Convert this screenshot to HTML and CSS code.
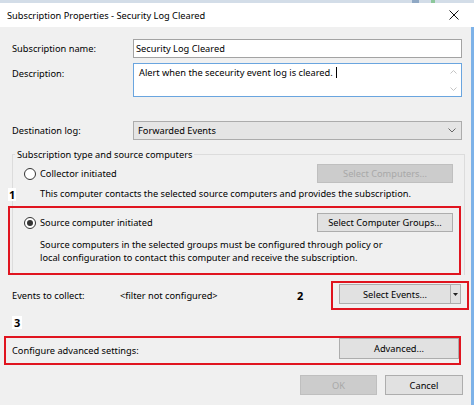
FILE: index.html
```html
<!DOCTYPE html>
<html>
<head>
<meta charset="utf-8">
<title>Subscription Properties</title>
<link rel="stylesheet" href="styles.css">
</head>
<body>
<div class="desk"><span class="dk-icon dk-a"></span><span class="dk-icon dk-b"></span></div>
<div class="win">
  <div class="titlebar">
    <span class="title">Subscription Properties - Security Log Cleared</span>
    <svg class="close" width="10" height="10" viewBox="0 0 10 10"><path d="M0.5 0.5L9.5 9.5M9.5 0.5L0.5 9.5" stroke="#111" stroke-width="1" fill="none"/></svg>
  </div>
  <div class="content">
    <div class="row r-name">
      <span class="lbl">Subscription name:</span>
      <div class="field">Security Log Cleared</div>
    </div>
    <div class="row r-desc">
      <span class="lbl lbl-top">Description:</span>
      <div class="field area">
        <span class="area-text">Alert when the seceurity event log is cleared.</span><span class="caret"></span>
        <div class="scroll">
          <svg width="7" height="4" viewBox="0 0 7 4"><path d="M0.5 3.5L3.5 0.5L6.5 3.5" stroke="#c4c4c4" fill="none"/></svg>
          <svg width="7" height="4" viewBox="0 0 7 4"><path d="M0.5 0.5L3.5 3.5L6.5 0.5" stroke="#c4c4c4" fill="none"/></svg>
        </div>
      </div>
    </div>
    <div class="row r-dest">
      <span class="lbl">Destination log:</span>
      <div class="field combo">
        <span>Forwarded Events</span>
        <svg class="chev" width="8" height="5" viewBox="0 0 8 5"><path d="M0.5 0.5L4 4L7.5 0.5" stroke="#666" fill="none"/></svg>
      </div>
    </div>
    <fieldset class="group">
      <legend>Subscription type and source computers</legend>
      <div class="opt">
        <span class="radio"></span>
        <span class="opt-label">Collector initiated</span>
        <span class="btn btn-disabled">Select Computers...</span>
      </div>
      <div class="opt-desc"><span class="badge badge-1">1</span>This computer contacts the selected source computers and provides the subscription.</div>
      <div class="mark mark-1">
        <div class="opt opt-in">
          <span class="radio radio-on"></span>
          <span class="opt-label">Source computer initiated</span>
          <span class="btn">Select Computer Groups...</span>
        </div>
        <div class="opt-desc opt-desc-in">Source computers in the selected groups must be configured through policy or<br>local configuration to contact this computer and receive the subscription.</div>
      </div>
    </fieldset>
    <div class="row r-events">
      <span class="lbl-e">Events to collect:</span>
      <span class="filter">&lt;filter not configured&gt;</span>
      <span class="num">2</span>
      <div class="mark mark-2">
        <div class="split">
          <span class="split-main">Select Events...</span>
          <span class="split-arrow"><svg width="5" height="3" viewBox="0 0 5 3"><path d="M0 0H5L2.5 3Z" fill="#222"/></svg></span>
        </div>
      </div>
    </div>
    <div class="row r-three"><span class="badge badge-3">3</span></div>
    <div class="mark mark-3">
      <span class="adv-label">Configure advanced settings:</span>
      <span class="btn btn-adv">Advanced...</span>
    </div>
    <div class="footer">
      <span class="btn btn-disabled btn-ok">OK</span>
      <span class="btn btn-cancel">Cancel</span>
    </div>
  </div>
</div>
</body>
</html>
```
FILE: styles.css
```css
* { box-sizing: border-box; }
html, body {
  margin: 0;
  padding: 0;
}
body {
  width: 474px;
  height: 405px;
  overflow: hidden;
  background: #f0f0f0;
  font-family: "Noto Sans", "DejaVu Sans", sans-serif;
  font-size: 9.25px;
  line-height: 13px;
  color: #000;
}
.desk {
  height: 3px;
  background: #d3dde8;
  display: flex;
}
.dk-icon { display: block; height: 3px; }
.dk-a { width: 7px; margin-left: 412px; background: #8fa8c4; }
.dk-b { width: 4px; margin-left: 12px; background: #8cc79a; }

.win { width: 474px; }
.titlebar {
  height: 24px;
  background: #fff;
  display: flex;
  align-items: center;
  justify-content: space-between;
  padding: 0 15px 0 7px;
}
.close { display: block; }

.content {
  height: 378px;
  background: #f0f0f0;
  border-right: 3px solid #7db2e8;
  padding: 12px 9px 0 12px;
}
.row { display: flex; align-items: center; }
.lbl { width: 121px; flex: none; }
.field {
  flex: 1;
  height: 19px;
  border: 1px solid #a3a3a3;
  background: #fff;
  display: flex;
  align-items: center;
  padding-left: 2px;
}
.r-desc { margin-top: 5px; align-items: flex-start; }
.lbl-top { padding-top: 4px; }
.area {
  height: 34px;
  border-color: #6aa5df;
  align-items: flex-start;
  padding: 2px 0 0 5px;
  position: relative;
}
.caret {
  display: inline-block;
  width: 1px;
  height: 11px;
  background: #000;
  margin: 1px 0 0 3px;
}
.scroll {
  margin-left: auto;
  width: 15px;
  height: 30px;
  display: flex;
  flex-direction: column;
  align-items: center;
  justify-content: space-between;
  padding: 4px 0 5px;
}
.scroll svg { display: block; }
.r-dest { margin-top: 24px; }
.combo {
  background: #e5e5e5;
  border-color: #acacac;
  padding: 0 5px 0 4px;
  justify-content: space-between;
}
.chev { display: block; }

.group {
  margin: 8px -3px 0 0;
  padding: 0;
  border: 1px solid #dcdcdc;
  border-bottom: none;
  min-inline-size: 0;
}
.group legend {
  padding: 0 2px;
  margin-left: 2px;
  line-height: 13px;
}
.opt {
  display: flex;
  align-items: center;
  margin-top: 3px;
  padding: 0 11px 0 11px;
}
.radio {
  width: 12px;
  height: 12px;
  border: 1px solid #333;
  border-radius: 50%;
  background: #fff;
  flex: none;
  display: flex;
  align-items: center;
  justify-content: center;
}
.radio-on::after {
  content: "";
  width: 6px;
  height: 6px;
  border-radius: 50%;
  background: #333;
}
.opt-label { margin-left: 4px; flex: 1; }
.btn {
  display: flex;
  align-items: center;
  justify-content: center;
  height: 19px;
  background: #e1e1e1;
  border: 1px solid #adadad;
  flex: none;
}
.opt .btn { width: 136px; }
.btn-disabled {
  background: #cccccc;
  border-color: #bfbfbf;
  color: #a8a8a8;
}
.opt-desc {
  position: relative;
  margin-top: 4px;
  padding-left: 27px;
}
.badge {
  font-weight: 700;
  font-size: 11px;
  background: #fff;
  line-height: 13px;
}
.badge-1 {
  position: absolute;
  left: -5px;
  top: 1px;
  padding: 0 1px;
}
.mark { border: 2px solid #e0141f; }
.mark-1 {
  margin: 6px 3px 0 -5px;
  height: 69px;
}
.opt-in { margin-top: 5px; padding: 0 6px 0 14px; }
.opt-desc-in { margin-top: 6px; padding-left: 30px; }

.r-events { margin-top: 6px; }
.lbl-e { width: 108px; flex: none; }
.filter { width: 177px; flex: none; }
.num { width: 34px; flex: none; font-weight: 700; font-size: 11px; }
.mark-2 {
  width: 138px;
  height: 29px;
  margin-right: -7px;
  padding: 1px 6px 0 6px;
}
.split {
  display: flex;
  height: 20px;
  border: 1px solid #adadad;
  background: #e1e1e1;
}
.split-main {
  flex: 1;
  display: flex;
  align-items: center;
  justify-content: center;
  border-right: 1px solid #adadad;
}
.split-arrow {
  width: 9px;
  display: flex;
  align-items: center;
  justify-content: center;
}
.split-arrow svg { display: block; }

.r-three { margin-top: 6px; height: 13px; }
.badge-3 { padding: 0 2px; }

.mark-3 {
  margin: 7px 1px 0 -8px;
  height: 29px;
  display: flex;
  align-items: flex-start;
  padding: 0 0 0 6px;
}
.adv-label { align-self: center; flex: 1; }
.btn-adv { width: 120px; height: 21px; }

.footer {
  margin: 10px -1px 0 0;
  display: flex;
  justify-content: flex-end;
  gap: 8px;
}
.btn-ok { width: 77px; height: 20px; }
.btn-cancel { width: 78px; height: 20px; }
```
